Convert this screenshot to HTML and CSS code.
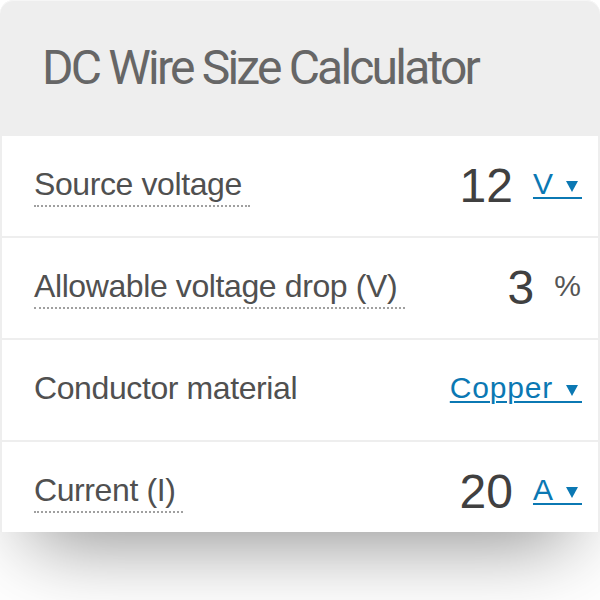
FILE: index.html
```html
<!DOCTYPE html>
<html>
<head>
<meta charset="utf-8">
<link rel="stylesheet" href="styles.css">
</head>
<body>
<div class="card">
  <div class="header"><h1 class="title">DC Wire Size Calculator</h1></div>
  <div class="row">
    <span class="label dotted">Source voltage</span>
    <div class="right">
      <span class="num">12</span>
      <span class="unit link"><span class="sym">V</span><span class="caret"><i></i></span></span>
    </div>
  </div>
  <div class="row">
    <span class="label dotted">Allowable voltage drop (V)</span>
    <div class="right">
      <span class="num">3</span>
      <span class="unit plain">%</span>
    </div>
  </div>
  <div class="row">
    <span class="label">Conductor material</span>
    <div class="right">
      <span class="unit link"><span class="sym wide">Copper</span><span class="caret"><i></i></span></span>
    </div>
  </div>
  <div class="row">
    <span class="label dotted">Current (I)</span>
    <div class="right">
      <span class="num">20</span>
      <span class="unit link"><span class="sym">A</span><span class="caret"><i></i></span></span>
    </div>
  </div>
</div>
<div class="shadow"></div>
</body>
</html>
```
FILE: styles.css
```css
html, body {
  margin: 0;
  padding: 0;
  background: #fff;
}
body {
  width: 600px;
  height: 600px;
  overflow: hidden;
  font-family: "Liberation Sans", Arial, sans-serif;
}
.card {
  height: 532px;
  overflow: hidden;
  background: #eeeeee;
  border-radius: 14px 14px 0 0;
  box-shadow: inset 0 1px 0 #f6f6f6;
  display: flex;
  flex-direction: column;
}
.header {
  height: 136px;
  flex: none;
  display: flex;
  align-items: center;
  padding-left: 42px;
}
.title {
  margin: 0;
  font-family: Roboto, "Liberation Sans", sans-serif;
  font-weight: normal;
  font-size: 48px;
  line-height: 48px;
  letter-spacing: -2.8px;
  color: #666666;
}
.row {
  flex: none;
  height: 100px;
  margin: 0 2px 2px;
  background: #fff;
  display: flex;
  align-items: flex-start;
  justify-content: space-between;
  padding: 0 16px 0 32px;
}
.label {
  margin-top: 32px;
  font-size: 32px;
  line-height: 32px;
  letter-spacing: -0.4px;
  color: #505050;
  padding-bottom: 5px;
  border-bottom: 2px solid transparent;
}
.label.dotted {
  padding-right: 8px;
  border-bottom: 2px dotted #a0a0a0;
}
.right {
  display: flex;
  align-items: flex-start;
  gap: 20px;
}
.num {
  margin-top: 26px;
  font-size: 48px;
  line-height: 48px;
  color: #404040;
}
.unit {
  margin-top: 33px;
  font-size: 30px;
  line-height: 30px;
  display: flex;
  align-items: flex-start;
}
.unit.plain {
  color: #555555;
  margin-right: 1px;
}
.unit.link {
  color: #0b78b3;
}
.sym {
  text-decoration: underline;
  text-decoration-thickness: 2px;
  text-underline-offset: 3px;
}
.sym.wide {
  letter-spacing: 0.8px;
}
.caret {
  width: 29px;
  height: 30px;
  box-sizing: border-box;
  border-bottom: 2px solid #0b78b3;
  margin-bottom: -2px;
  display: flex;
  justify-content: flex-end;
  padding: 12px 4px 0 0;
}
.caret i {
  width: 0;
  height: 0;
  border-left: 6px solid transparent;
  border-right: 6px solid transparent;
  border-top: 11px solid #0b78b3;
}
.shadow {
  height: 68px;
  overflow: hidden;
}
.shadow::before {
  content: "";
  display: block;
  height: 100px;
  margin: -100px 40px 0;
  box-shadow: 0 0 80px 10px rgba(0, 0, 0, 0.45);
}
```
